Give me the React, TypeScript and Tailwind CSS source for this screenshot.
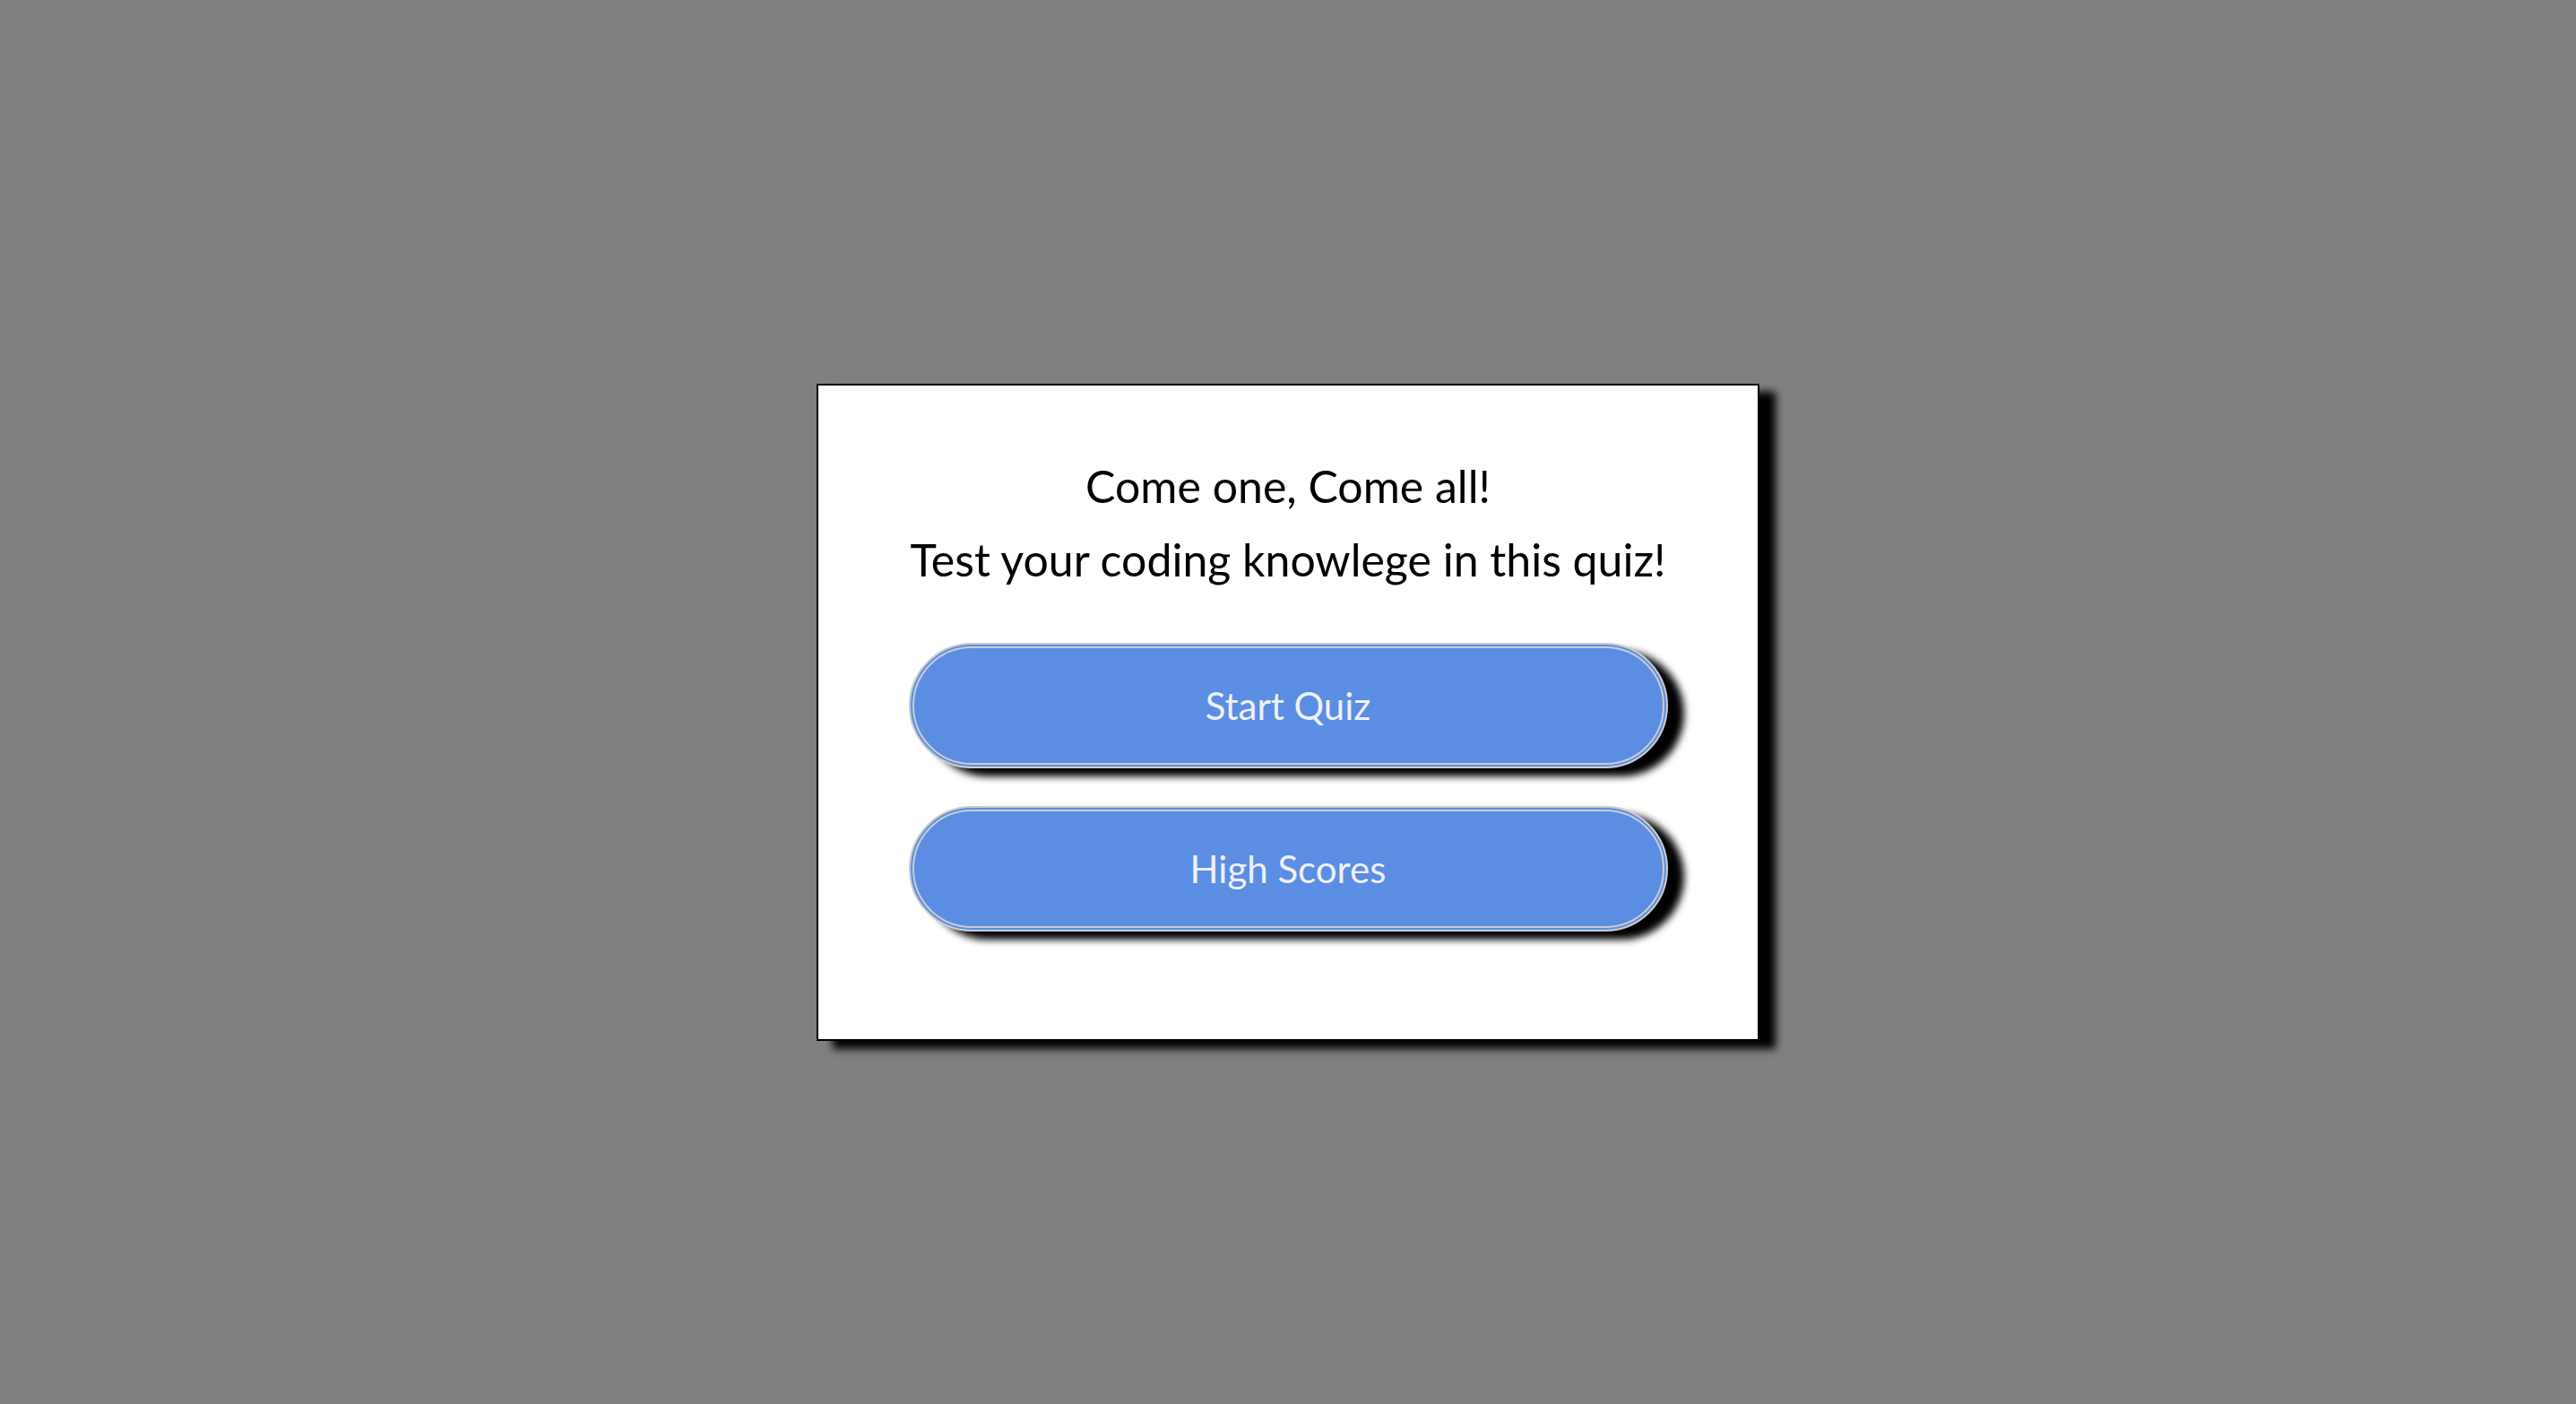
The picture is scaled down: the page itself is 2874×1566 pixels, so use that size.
import React from 'react';

const font = { fontFamily: 'Lato, "Noto Sans", sans-serif' };

function QuizButton({ label }: { label: string }) {
  return (
    <button
      className="w-[847px] h-[140px] rounded-full bg-[#5b8ee2] border-[6px] border-double border-[#cbcbd0] shadow-[18px_9px_9px_black] text-[#eef0f6] text-[42px] flex items-center justify-center"
      style={font}
    >
      {label}
    </button>
  );
}

export default function App() {
  return (
    <div className="min-h-screen w-full bg-[#808080] pt-[428px] flex justify-center" style={font}>
      <div className="w-[1052px] h-[733px] bg-white border-2 border-black shadow-[18px_9px_9px_black] flex flex-col items-center pt-[71px]">
        {/* Heading */}
        <p className="text-[50px] leading-[82px] text-black">Come one, Come all!</p>
        <p className="text-[50px] leading-[82px] text-black">Test your coding knowlege in this quiz!</p>

        {/* Actions */}
        <div className="mt-[52px] flex flex-col gap-[42px]">
          <QuizButton label="Start Quiz" />
          <QuizButton label="High Scores" />
        </div>
      </div>
    </div>
  );
}
